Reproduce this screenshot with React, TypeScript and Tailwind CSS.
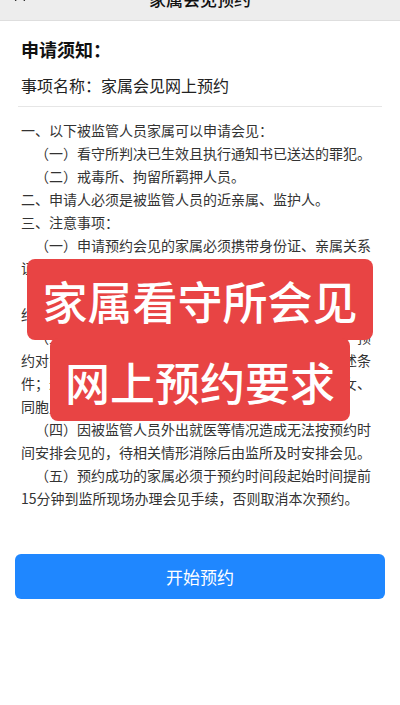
import { X } from "lucide-react"

const notes: { text: string; sub?: boolean }[] = [
  { text: "一、以下被监管人员家属可以申请会见：" },
  { text: "（一）看守所判决已生效且执行通知书已送达的罪犯。", sub: true },
  { text: "（二）戒毒所、拘留所羁押人员。", sub: true },
  { text: "二、申请人必须是被监管人员的近亲属、监护人。" },
  { text: "三、注意事项：" },
  {
    text: "（一）申请预约会见的家属必须携带身份证、亲属关系证明等有效证件，按预约时间到监所接受安全检查。",
    sub: true,
  },
  {
    text: "（二）会见人员须服从监所工作人员的管理，遵守会见纪律，不得私自传递物品或使用通讯工具。",
    sub: true,
  },
  {
    text: "（三）会见人员应为被监管人员的近亲属或监护人，预约对象须为本人近亲属，不得代他人预约，不符合上述条件；近亲属是指被监管人员的夫、妻、父、母、子、女、同胞兄弟姊妹。",
    sub: true,
  },
  {
    text: "（四）因被监管人员外出就医等情况造成无法按预约时间安排会见的，待相关情形消除后由监所及时安排会见。",
    sub: true,
  },
  {
    text: "（五）预约成功的家属必须于预约时间段起始时间提前15分钟到监所现场办理会见手续，否则取消本次预约。",
    sub: true,
  },
]

export default function App() {
  return (
    <div className="relative min-h-[705px] overflow-hidden bg-white font-['Noto_Sans_CJK_SC','Noto_Sans',sans-serif]">
      {/* top bar, partly scrolled out of view */}
      <header className="relative -mt-[23px] flex h-[44px] items-center justify-center border-b border-[#dedede] bg-[#ededed]">
        <X className="absolute left-[11px] top-[10px] h-[18px] w-[18px] text-[#333]" strokeWidth={1.5} />
        <span className="text-[17px] font-medium text-[#111]">家属会见预约</span>
      </header>

      <main className="mx-[18px]">
        <div className="border-b border-[#e6e6e6] px-[3px] pb-[9px]">
          <h2 className="mt-[15px] text-[18px] leading-[26px] font-bold text-[#111]">申请须知：</h2>
          <p className="mt-[11px] text-[16px] leading-[24px] text-[#222]">事项名称：家属会见网上预约</p>
        </div>

        <div className="mt-[12px] w-[356px] pl-[3px] text-[14px] leading-[23px] text-[#333]">
          {notes.map((n) => (
            <p key={n.text} className={n.sub ? "indent-[14px]" : ""}>
              {n.text}
            </p>
          ))}
        </div>
      </main>

      <div className="mx-[15px] mt-[44px] flex h-[45px] items-center justify-center rounded-[6px] bg-[#1f87ff] text-[17px] text-white">
        开始预约
      </div>

      {/* title card laid over the notice */}
      <div className="absolute left-0 right-0 top-[259px] flex flex-col items-center text-[45px] font-medium leading-none text-white">
        <div className="flex h-[81px] w-[346px] items-center justify-center rounded-[8px] bg-[#e84444] pt-[2px]">
          家属看守所会见
        </div>
        <div className="-mt-[2px] flex h-[83px] w-[300px] items-center justify-center rounded-[8px] bg-[#e84444] pt-[4px]">
          网上预约要求
        </div>
      </div>
    </div>
  )
}
